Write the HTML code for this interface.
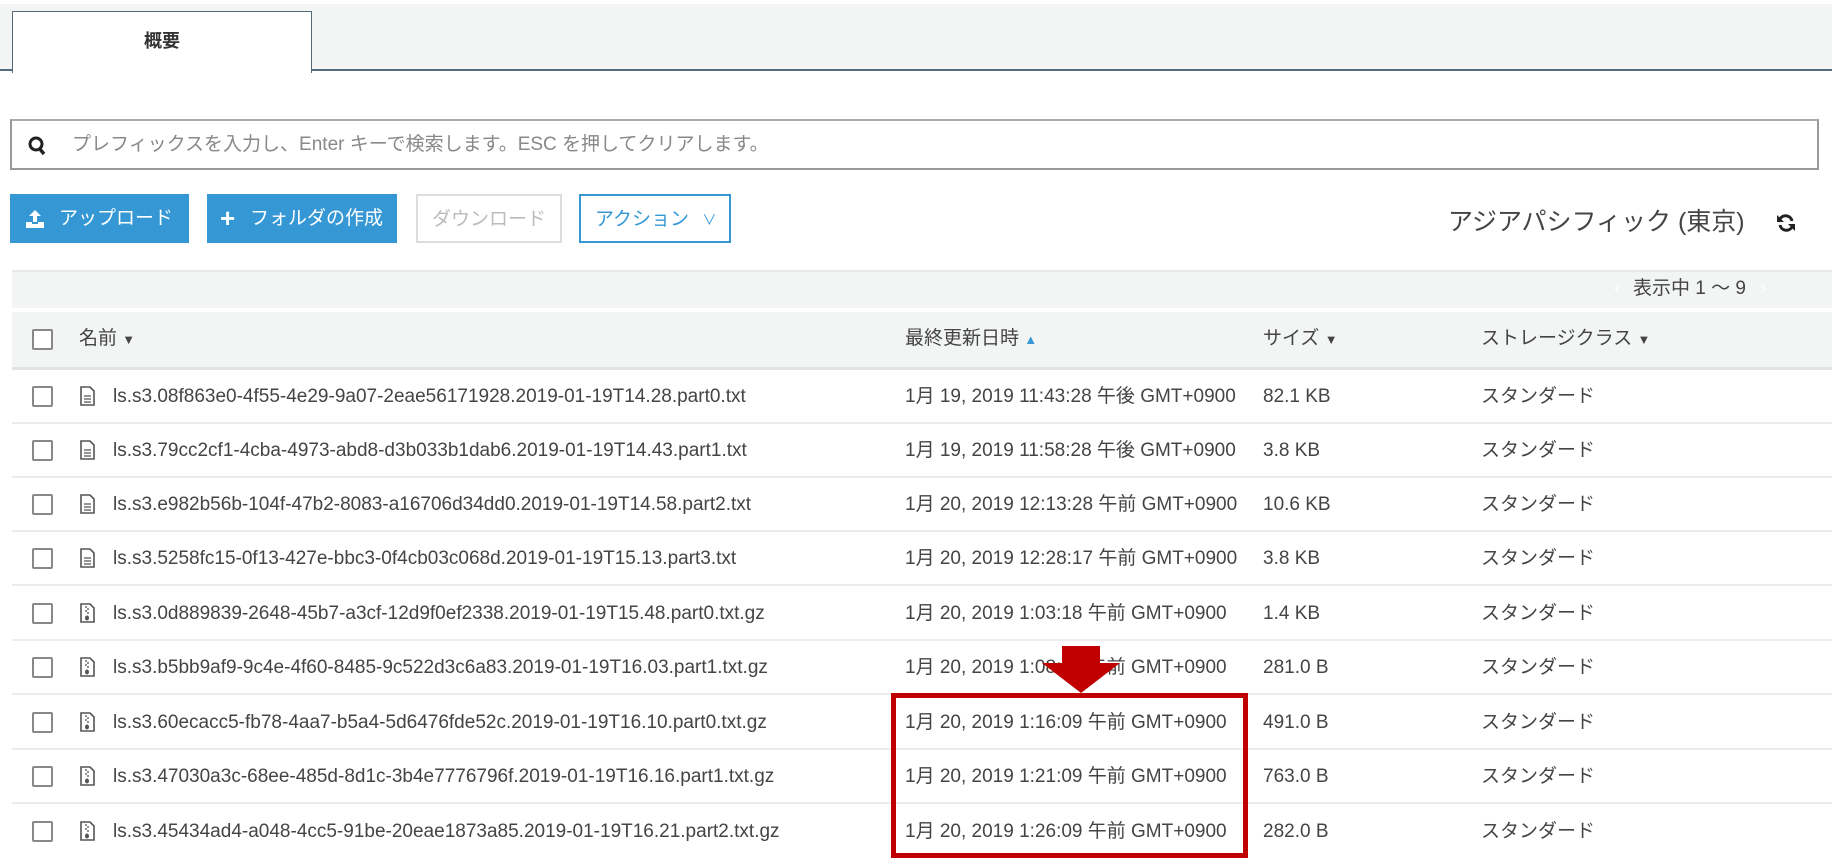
<!DOCTYPE html>
<html><head><meta charset="utf-8"><style>
*{margin:0;padding:0;box-sizing:border-box}
body{width:1832px;height:865px;overflow:hidden;background:#fff;font-family:"Liberation Sans","Noto Sans CJK JP",sans-serif;color:#444;position:relative}
.a{position:absolute}
.band{left:0;top:4px;width:1832px;height:67px;background:#f3f5f5;border-bottom:2px solid #546b7a}
.tab{left:12px;top:11px;width:300px;height:62px;background:#fff;border:1px solid #546b7a;border-bottom:none;font-size:18px;font-weight:bold;color:#333;text-align:center;line-height:58px}
.search{left:10px;top:119px;width:1809px;height:51px;border:2px solid #999;border-top-color:#aaa;background:#fff}
.search span{position:absolute;left:60px;top:0;line-height:47px;font-size:19px;color:#888}
.btn{top:194px;height:49px;font-size:19px;line-height:47px;color:#fff;background:#3598d5;border:1px solid #3598d5}
.row{left:12px;width:1820px;height:54px;border-bottom:2px solid #ececec}
.cb{position:absolute;left:20px;width:21px;height:21px;border:2px solid #888;border-radius:2px;background:#fff}
.t{position:absolute;font-size:19px;white-space:nowrap;color:#444;top:0;line-height:54px}
</style></head><body>
<div class="a band"></div>
<div class="a tab">概要</div>
<div class="a search">
<svg class="a" style="left:16px;top:15px" width="18" height="20" viewBox="0 0 18 20"><circle cx="8" cy="8" r="6" fill="none" stroke="#222" stroke-width="3"/><path d="M11 12l5 6" stroke="#222" stroke-width="3.5"/></svg>
<span>プレフィックスを入力し、Enter キーで検索します。ESC を押してクリアします。</span></div>
<div class="a btn" style="left:10px;width:179px"><svg class="a" style="left:14px;top:14px" width="20" height="20" viewBox="0 0 20 20"><path d="M10 1l-6 6h4v6h4V7h4z M1 13h6v2h6v-2h6v6H1z" fill="#fff"/></svg><span style="position:absolute;left:48px">アップロード</span></div>
<div class="a btn" style="left:207px;width:190px"><span style="position:absolute;left:12px;font-size:26px;font-weight:bold">+</span><span style="position:absolute;left:42px">フォルダの作成</span></div>
<div class="a btn" style="left:416px;width:146px;background:#fff;border:2px solid #ddd;color:#bbb;text-align:center">ダウンロード</div>
<div class="a btn" style="left:579px;width:152px;background:#fff;border:2px solid #3598d5;color:#3598d5;padding-left:14px">アクション <span style="font-size:14px;margin-left:8px">∨</span></div>
<div class="a" style="left:1448px;top:204px;font-size:25px;color:#444;line-height:36px">アジアパシフィック (東京)</div>
<svg class="a" style="left:1776px;top:213px" width="20" height="20" viewBox="0 0 20 20"><path d="M16 8A6.5 6.5 0 0 0 4 6" fill="none" stroke="#222" stroke-width="3"/><path d="M1 2v7h7z" fill="#222"/><path d="M4 12a6.5 6.5 0 0 0 12 2" fill="none" stroke="#222" stroke-width="3"/><path d="M19 18v-7h-7z" fill="#222"/></svg>
<div class="a" style="left:12px;top:270px;width:1820px;height:38px;background:#f3f5f5;border-top:2px solid #e8e8e8"></div>
<div class="a t" style="left:1614px;top:270px;line-height:38px;color:#fff">‹</div>
<div class="a t" style="left:1633px;top:270px;line-height:38px">表示中 1 ～ 9</div>
<div class="a t" style="left:1760px;top:270px;line-height:38px;color:#fff">›</div>
<div class="a row" style="top:312px;height:58px;background:#f3f5f5;border-bottom:3px solid #e2e2e2">
<div class="cb" style="top:17px"></div>
<div class="t" style="left:67px">名前 <span style="font-size:13px">▼</span></div>
<div class="t" style="left:893px">最終更新日時 <span style="font-size:13px;color:#3598d5">▲</span></div>
<div class="t" style="left:1251px">サイズ <span style="font-size:13px">▼</span></div>
<div class="t" style="left:1469px">ストレージクラス <span style="font-size:13px">▼</span></div>
</div>
<div class="a row" style="top:370px"><div class="cb" style="top:16px"></div><svg class="a" style="left:68px;top:16px" width="15" height="20" viewBox="0 0 15 20"><path d="M1 1h9l4 4v14H1z" fill="none" stroke="#555" stroke-width="1.6"/><path d="M4 10h7M4 13h7M4 16h7" stroke="#555" stroke-width="1.3"/></svg><div class="t" style="left:101px">ls.s3.08f863e0-4f55-4e29-9a07-2eae56171928.2019-01-19T14.28.part0.txt</div><div class="t" style="left:893px">1月 19, 2019 11:43:28 午後 GMT+0900</div><div class="t" style="left:1251px">82.1 KB</div><div class="t" style="left:1469px">スタンダード</div></div>
<div class="a row" style="top:424px"><div class="cb" style="top:16px"></div><svg class="a" style="left:68px;top:16px" width="15" height="20" viewBox="0 0 15 20"><path d="M1 1h9l4 4v14H1z" fill="none" stroke="#555" stroke-width="1.6"/><path d="M4 10h7M4 13h7M4 16h7" stroke="#555" stroke-width="1.3"/></svg><div class="t" style="left:101px">ls.s3.79cc2cf1-4cba-4973-abd8-d3b033b1dab6.2019-01-19T14.43.part1.txt</div><div class="t" style="left:893px">1月 19, 2019 11:58:28 午後 GMT+0900</div><div class="t" style="left:1251px">3.8 KB</div><div class="t" style="left:1469px">スタンダード</div></div>
<div class="a row" style="top:478px"><div class="cb" style="top:16px"></div><svg class="a" style="left:68px;top:16px" width="15" height="20" viewBox="0 0 15 20"><path d="M1 1h9l4 4v14H1z" fill="none" stroke="#555" stroke-width="1.6"/><path d="M4 10h7M4 13h7M4 16h7" stroke="#555" stroke-width="1.3"/></svg><div class="t" style="left:101px">ls.s3.e982b56b-104f-47b2-8083-a16706d34dd0.2019-01-19T14.58.part2.txt</div><div class="t" style="left:893px">1月 20, 2019 12:13:28 午前 GMT+0900</div><div class="t" style="left:1251px">10.6 KB</div><div class="t" style="left:1469px">スタンダード</div></div>
<div class="a row" style="top:532px"><div class="cb" style="top:16px"></div><svg class="a" style="left:68px;top:16px" width="15" height="20" viewBox="0 0 15 20"><path d="M1 1h9l4 4v14H1z" fill="none" stroke="#555" stroke-width="1.6"/><path d="M4 10h7M4 13h7M4 16h7" stroke="#555" stroke-width="1.3"/></svg><div class="t" style="left:101px">ls.s3.5258fc15-0f13-427e-bbc3-0f4cb03c068d.2019-01-19T15.13.part3.txt</div><div class="t" style="left:893px">1月 20, 2019 12:28:17 午前 GMT+0900</div><div class="t" style="left:1251px">3.8 KB</div><div class="t" style="left:1469px">スタンダード</div></div>
<div class="a row" style="top:587px"><div class="cb" style="top:16px"></div><svg class="a" style="left:68px;top:16px" width="15" height="20" viewBox="0 0 15 20"><path d="M1 1h9l4 4v14H1z" fill="none" stroke="#555" stroke-width="1.6"/><path d="M6 3v2M8 5v2M6 7v2M8 9v2" stroke="#555" stroke-width="1.3"/><ellipse cx="7" cy="15" rx="2" ry="2.5" fill="#555"/></svg><div class="t" style="left:101px">ls.s3.0d889839-2648-45b7-a3cf-12d9f0ef2338.2019-01-19T15.48.part0.txt.gz</div><div class="t" style="left:893px">1月 20, 2019 1:03:18 午前 GMT+0900</div><div class="t" style="left:1251px">1.4 KB</div><div class="t" style="left:1469px">スタンダード</div></div>
<div class="a row" style="top:641px"><div class="cb" style="top:16px"></div><svg class="a" style="left:68px;top:16px" width="15" height="20" viewBox="0 0 15 20"><path d="M1 1h9l4 4v14H1z" fill="none" stroke="#555" stroke-width="1.6"/><path d="M6 3v2M8 5v2M6 7v2M8 9v2" stroke="#555" stroke-width="1.3"/><ellipse cx="7" cy="15" rx="2" ry="2.5" fill="#555"/></svg><div class="t" style="left:101px">ls.s3.b5bb9af9-9c4e-4f60-8485-9c522d3c6a83.2019-01-19T16.03.part1.txt.gz</div><div class="t" style="left:893px">1月 20, 2019 1:08:09 午前 GMT+0900</div><div class="t" style="left:1251px">281.0 B</div><div class="t" style="left:1469px">スタンダード</div></div>
<div class="a row" style="top:696px"><div class="cb" style="top:16px"></div><svg class="a" style="left:68px;top:16px" width="15" height="20" viewBox="0 0 15 20"><path d="M1 1h9l4 4v14H1z" fill="none" stroke="#555" stroke-width="1.6"/><path d="M6 3v2M8 5v2M6 7v2M8 9v2" stroke="#555" stroke-width="1.3"/><ellipse cx="7" cy="15" rx="2" ry="2.5" fill="#555"/></svg><div class="t" style="left:101px">ls.s3.60ecacc5-fb78-4aa7-b5a4-5d6476fde52c.2019-01-19T16.10.part0.txt.gz</div><div class="t" style="left:893px">1月 20, 2019 1:16:09 午前 GMT+0900</div><div class="t" style="left:1251px">491.0 B</div><div class="t" style="left:1469px">スタンダード</div></div>
<div class="a row" style="top:750px"><div class="cb" style="top:16px"></div><svg class="a" style="left:68px;top:16px" width="15" height="20" viewBox="0 0 15 20"><path d="M1 1h9l4 4v14H1z" fill="none" stroke="#555" stroke-width="1.6"/><path d="M6 3v2M8 5v2M6 7v2M8 9v2" stroke="#555" stroke-width="1.3"/><ellipse cx="7" cy="15" rx="2" ry="2.5" fill="#555"/></svg><div class="t" style="left:101px">ls.s3.47030a3c-68ee-485d-8d1c-3b4e7776796f.2019-01-19T16.16.part1.txt.gz</div><div class="t" style="left:893px">1月 20, 2019 1:21:09 午前 GMT+0900</div><div class="t" style="left:1251px">763.0 B</div><div class="t" style="left:1469px">スタンダード</div></div>
<div class="a row" style="top:805px;border-bottom:none"><div class="cb" style="top:16px"></div><svg class="a" style="left:68px;top:16px" width="15" height="20" viewBox="0 0 15 20"><path d="M1 1h9l4 4v14H1z" fill="none" stroke="#555" stroke-width="1.6"/><path d="M6 3v2M8 5v2M6 7v2M8 9v2" stroke="#555" stroke-width="1.3"/><ellipse cx="7" cy="15" rx="2" ry="2.5" fill="#555"/></svg><div class="t" style="left:101px">ls.s3.45434ad4-a048-4cc5-91be-20eae1873a85.2019-01-19T16.21.part2.txt.gz</div><div class="t" style="left:893px">1月 20, 2019 1:26:09 午前 GMT+0900</div><div class="t" style="left:1251px">282.0 B</div><div class="t" style="left:1469px">スタンダード</div></div>
<div class="a" style="left:891px;top:693px;width:357px;height:165px;border:5px solid #c00000"></div>
<svg class="a" style="left:1040px;top:644px" width="82" height="50" viewBox="0 0 82 50"><path d="M22 2h38v17h20L41 49 2 19h20z" fill="#c00000"/></svg>
</body></html>
